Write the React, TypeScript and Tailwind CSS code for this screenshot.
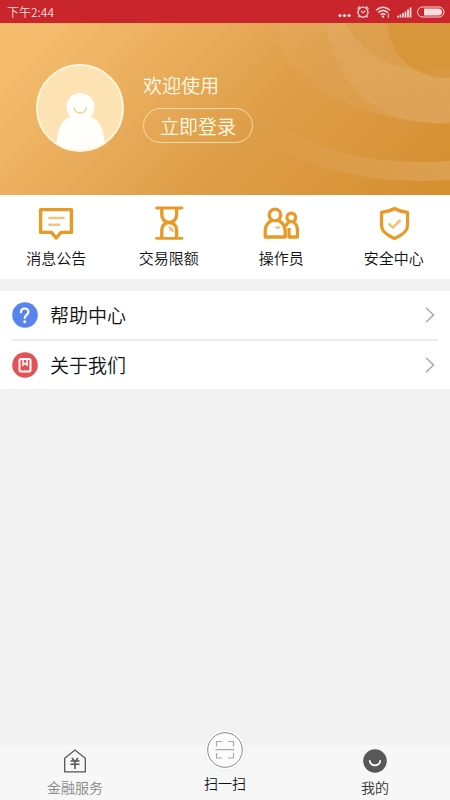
import type { ReactNode } from "react";

const StatusBar = () => {
  return (
    <div className="flex h-[23px] items-center justify-between bg-[#c9252d] pl-[7px] pr-[5px] text-[#fbdcdc]">
      <span className="text-[12px] leading-none">下午2:44</span>
      <svg className="h-[16px] w-[110px]" viewBox="0 0 110 16" fill="none" stroke="currentColor">
        {/* notifications */}
        <g fill="currentColor" stroke="none">
          <circle cx="5" cy="11.5" r="1.6" />
          <circle cx="9.5" cy="11.5" r="1.6" />
          <circle cx="14" cy="11.5" r="1.6" />
        </g>
        {/* alarm */}
        <circle cx="28" cy="8.2" r="5" strokeWidth="1.3" />
        <path d="M22.4 4.6l2.6-2.2M33.6 4.6L31 2.4M26 6.8l2 2 2.4-2M24.4 12.2l-1 1.2M31.6 12.2l1 1.2" strokeWidth="1.2" />
        {/* wifi */}
        <path d="M41.2 6.2c4-4 9.6-4 13.6 0M43.4 8.6c2.8-2.8 6.4-2.8 9.2 0M45.6 10.8c1.5-1.4 3.3-1.4 4.8 0" strokeWidth="1.5" />
        <circle cx="48" cy="12.6" r="1.2" fill="currentColor" stroke="none" />
        <path d="M53.3 9.5v4.5" strokeWidth="1" />
        {/* signal */}
        <path d="M63 13.5v-1.8M65.5 13.5v-3M68 13.5V9M70.500 13.500V7.500M73 13.500V5.500M75.500 13.500V3.500" strokeWidth="1.800" />
        {/* battery */}
        <rect x="82.500" y="3" width="26.500" height="10" rx="5" strokeWidth="1" />
        <path d="M89 4.500h14.500a3.500 3.500 0 0 1 0 7H89z" fill="currentColor" stroke="none" />
      </svg>
    </div>
  );
};

const Avatar = () => {
  return (
    <svg className="h-[88px] w-[88px] shrink-0" viewBox="0 0 88 88" fill="none">
      <defs>
        <clipPath id="face">
          <circle cx="44" cy="44" r="43" />
        </clipPath>
      </defs>
      <circle cx="44" cy="44" r="43" fill="#fde2b4" />
      <g clipPath="url(#face)">
        <path d="M20 88c0-22 6-34 15-35h19c9 1 15 13 15 35z" fill="#fffefb" />
        <circle cx="44.500" cy="43" r="14" fill="#fffefb" />
      </g>
      <path d="M38 43c.5 8 12 8 12.500 0" stroke="#e9cf95" strokeWidth="1.300" />
      <circle cx="44" cy="44" r="43" stroke="#fff6dc" strokeWidth="2" />
    </svg>
  );
};

const Swirls = () => {
  return (
    <svg className="absolute inset-0 h-full w-full" viewBox="0 23 450 172" preserveAspectRatio="xMaxYMin slice" fillRule="evenodd">
      <defs>
        <linearGradient id="fade" gradientUnits="userSpaceOnUse" x1="250" y1="0" x2="450" y2="0">
          <stop offset="0" stopColor="#e8bd8a" stopOpacity="0" />
          <stop offset="1" stopColor="#e8bd8a" stopOpacity="0.350" />
        </linearGradient>
        <linearGradient id="veil" gradientUnits="userSpaceOnUse" x1="270" y1="0" x2="450" y2="0">
          <stop offset="0" stopColor="#e8bd8a" stopOpacity="0.080" />
          <stop offset="1" stopColor="#e8bd8a" stopOpacity="0.250" />
        </linearGradient>
      </defs>
      <path fill="url(#fade)" d="M190 30a230 151 0 1 0 460 0a230 151 0 1 0-460 0zM220 40a200 122 0 1 0 400 0a200 122 0 1 0-400 0z" />
      <ellipse cx="455" cy="23" rx="179" ry="101" fill="url(#veil)" />
      <circle cx="432" cy="18" r="105" fill="#e6b980" fillOpacity="0.200" />
      <circle cx="425" cy="-20" r="91" fill="#d99a3e" fillOpacity="0.450" />
      <circle cx="445" cy="20" r="58" fill="#d69130" fillOpacity="0.600" />
    </svg>
  );
};

const Header = () => {
  return (
    <header className="relative h-[172px] bg-linear-135 from-[#f4bb6d] from-10% via-[#dd9c46] via-60% to-[#d58f2f]">
      <Swirls />
      <div className="relative flex items-start pl-9 pt-[41px]">
        <Avatar />
        <div className="ml-[19px] pt-[9px] text-[#fffbe6]">
          <p className="text-[19px] leading-6">欢迎使用</p>
          <button type="button" className="mt-[11px] h-[35px] rounded-full border border-[#f6dba6] px-4 text-[19px] leading-none">
            立即登录
          </button>
        </div>
      </div>
    </header>
  );
};

const MessageIcon = () => (
  <svg className="h-[34px] w-[36px]" viewBox="0 0 36 34" fill="none" stroke="#e99a26" strokeWidth="3.400">
    <path d="M2.600 3.600h30.800v22.800H23L18.200 32l-4.800-5.600H2.600z" strokeLinejoin="round" />
    <path d="M11.500 12h14M11.500 18.700h9.500" stroke="#f3c27b" strokeWidth="2.600" strokeLinecap="round" />
  </svg>
);

const HourglassIcon = () => (
  <svg className="h-[34px] w-[36px]" viewBox="0 0 36 34" fill="none" stroke="#e99a26" strokeWidth="3.400">
    <path d="M5.500 2h25.500M5.500 32.300h25.500" strokeLinecap="round" strokeWidth="2.800" />
    <path d="M10.800 3v6c0 4 3 7.500 7.400 7.500s7.400-3.500 7.400-7.500V3M10.800 31.500V24c0-4 3-7.500 7.400-7.500s7.400 3.500 7.400 7.500v7.500" />
    <path d="M17.500 20.500c3.500 0 5.500 2.500 5.500 6-2.500-.5-5.500-2.500-5.500-6z" fill="#f3c27b" stroke="none" />
  </svg>
);

const OperatorIcon = () => (
  <svg className="h-[34px] w-[36px]" viewBox="0 0 36 34" fill="none" stroke="#e99a26" strokeWidth="3.300">
    <circle cx="12" cy="9" r="5.800" />
    <path d="M8.500 14.500C4 17 2.200 20 2.200 25v6h20v-6c0-5-2-8-6.500-10.500" strokeLinejoin="round" />
    <circle cx="28.300" cy="11.500" r="4.300" />
    <path d="M26 16c-1.500 1-2.500 2-3 4M30.500 16c3 2 4 4.500 4 9v6H26V22" strokeLinejoin="round" />
    <path d="M13.500 21.500h2.500" stroke="#f3c27b" strokeWidth="2.600" strokeLinecap="round" />
  </svg>
);

const ShieldIcon = () => (
  <svg className="h-[34px] w-[36px]" viewBox="0 0 36 34" fill="none" stroke="#e99a26" strokeWidth="3.200">
    <path d="M18.500 2.500c-4 2.300-8 3.500-13 3.800v13.200c0 6 5 9.500 13 13 8-3.500 13-7 13-13V6.300c-5-.3-9-1.500-13-3.800z" strokeLinejoin="round" />
    <path d="M12.500 17.500l4.500 4 7.500-7.500" stroke="#f3c27b" strokeWidth="2.600" />
  </svg>
);

const shortcuts = [
  { label: "消息公告", icon: <MessageIcon /> },
  { label: "交易限额", icon: <HourglassIcon /> },
  { label: "操作员", icon: <OperatorIcon /> },
  { label: "安全中心", icon: <ShieldIcon /> },
];

const HelpIcon = () => (
  <svg className="h-[26px] w-[26px]" viewBox="0 0 26 26" fill="none">
    <circle cx="13" cy="13" r="12.800" fill="#5983f1" />
    <path d="M9 10.300c0-5 7.500-5 7.500-.5 0 3-3.800 3-3.800 6.200" stroke="#fff" strokeWidth="2.200" strokeLinecap="round" />
    <circle cx="12.700" cy="19.800" r="1.500" fill="#fff" />
  </svg>
);

const AboutIcon = () => (
  <svg className="h-[26px] w-[26px]" viewBox="0 0 26 26" fill="none" stroke="#fff">
    <circle cx="13" cy="13" r="12.800" fill="#e25357" stroke="none" />
    <rect x="7.500" y="7" width="11" height="12.500" rx="1.500" strokeWidth="2" />
    <path d="M11 7v6l2-1.600 2 1.600V7" strokeWidth="1.500" />
  </svg>
);

const ListRow = ({ icon, label }: { icon: ReactNode; label: string }) => {
  return (
    <a href="#" className="flex h-12 items-center text-[19px] text-[#111]">
      {icon}
      <span className="ml-3 flex-1 leading-6">{label}</span>
      <svg className="mr-[3px] h-4 w-[10px]" viewBox="0 0 10 16" fill="none" stroke="#a9a9a9" strokeWidth="1.500">
        <path d="M1 .7L8.500 8 1 15.300" />
      </svg>
    </a>
  );
};

const TabBar = () => {
  return (
    <nav className="grid h-[55px] grid-cols-3 bg-[#f7f7f7] text-[14px] leading-4">
      <a href="#" className="flex flex-col items-center pt-1 text-[#888]">
        <svg className="h-6 w-6" viewBox="0 0 24 24" fill="none" stroke="#555" strokeWidth="1.300">
          <path d="M1.700 9.200L12 1l10.300 8.200v13.600H1.700z" />
          <path d="M9 9l2 2.500M15 9l-2 2.500M7.500 12h9M7.500 15.300h9M12 11.500V20" strokeWidth="1.600" />
        </svg>
        <span className="mt-[6px]">金融服务</span>
      </a>
      <a href="#" className="flex flex-col items-center text-[#111]">
        <svg className="-mt-[17px] h-[44px] w-[44px]" viewBox="0 0 44 44" fill="none" stroke="#aaa">
          <circle cx="22" cy="22" r="21" fill="#ededed" stroke="none" />
          <circle cx="22" cy="22" r="20" fill="#fbfbfb" stroke="none" />
          <circle cx="22" cy="22" r="17.300" stroke="#888" />
          <path d="M13.500 18.500v-5H19M25 13.500h5.500v5M13.500 25v5H19M25 30h5.500v-5M12.500 21.700h19" strokeWidth="1.200" />
        </svg>
        <span className="mt-[3px]">扫一扫</span>
      </a>
      <a href="#" className="flex flex-col items-center pt-1 text-[#333]">
        <svg className="h-6 w-6" viewBox="0 0 24 24" fill="none">
          <circle cx="12" cy="12" r="11.800" fill="#585858" />
          <path d="M6.800 11.800c.8 6 9.600 6 10.400 0" stroke="#fff" strokeWidth="1.700" strokeLinecap="round" />
        </svg>
        <span className="mt-[6px]">我的</span>
      </a>
    </nav>
  );
};

const App = () => {
  return (
    <div className="flex min-h-screen flex-col bg-[#f2f2f2] font-['Noto_Sans_CJK_SC',sans-serif] font-[350]">
      <StatusBar />
      <Header />
      {/* shortcuts */}
      <div className="grid h-[84px] grid-cols-4 bg-white pt-[11px]">
        {shortcuts.map((item) => (
          <a key={item.label} href="#" className="flex flex-col items-center gap-2 text-[15px] leading-5 text-[#111]">
            {item.icon}
            {item.label}
          </a>
        ))}
      </div>
      {/* menu */}
      <div className="mt-3 bg-white px-3">
        <ListRow icon={<HelpIcon />} label="帮助中心" />
        <hr className="border-t-2 border-[#ececec]" />
        <ListRow icon={<AboutIcon />} label="关于我们" />
      </div>
      <div className="flex-1" />
      <TabBar />
    </div>
  );
};

export default App;
